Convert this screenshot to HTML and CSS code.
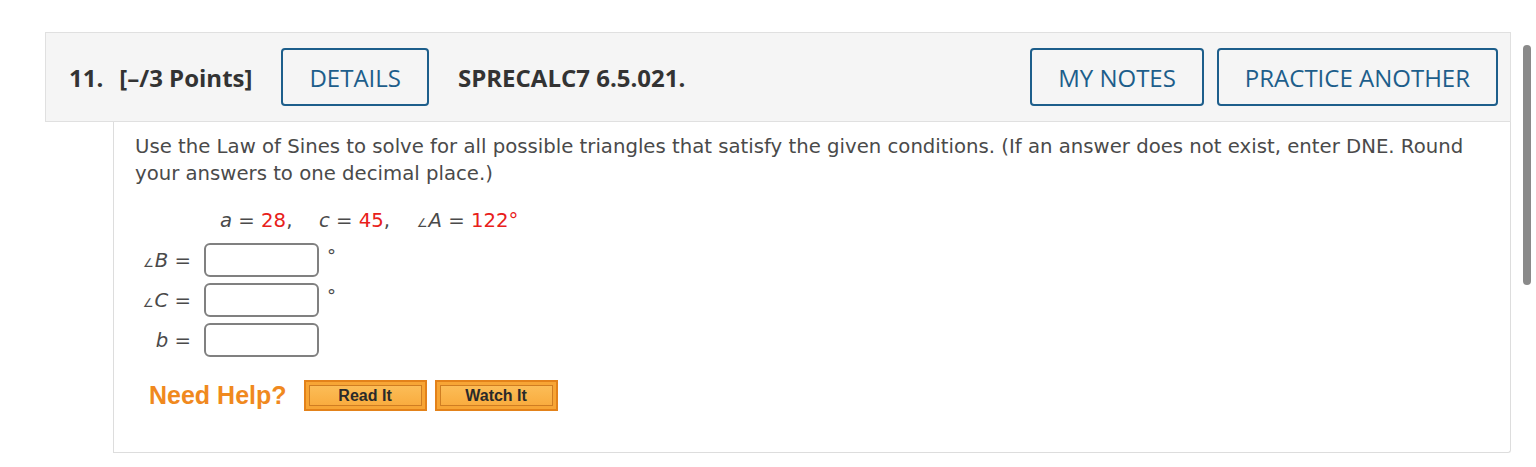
FILE: index.html
```html
<!doctype html>
<html>

<head>
    <link rel="stylesheet" href="styles.css">
</head>

<body>
    <div class="question">
        <div class="question-header">
            <span class="question-number">11.</span>
            <span class="points">[&ndash;/3 Points]</span>
            <button class="header-btn details-btn">DETAILS</button>
            <span class="question-ref">SPRECALC7 6.5.021.</span>
            <span class="spacer"></span>
            <button class="header-btn">MY NOTES</button>
            <button class="header-btn">PRACTICE ANOTHER</button>
        </div>
        <div class="question-body">
            <p class="prompt">
                Use the Law of Sines to solve for all possible triangles that satisfy the given conditions. (If an
                answer does not exist, enter DNE. Round your answers to one decimal place.)
            </p>
            <p class="given">
                <i>a</i> = <span class="value">28</span>,
                <span class="sep"></span>
                <i>c</i> = <span class="value">45</span>,
                <span class="sep"></span>
                <span class="angle">&ang;</span><i>A</i> = <span class="value">122&deg;</span>
            </p>
            <div class="answers">
                <div class="answer-row">
                    <label class="answer-label"><span class="angle">&ang;</span><i>B</i> =</label>
                    <input class="answer-input" type="text">
                    <span class="unit">&deg;</span>
                </div>
                <div class="answer-row">
                    <label class="answer-label"><span class="angle">&ang;</span><i>C</i> =</label>
                    <input class="answer-input" type="text">
                    <span class="unit">&deg;</span>
                </div>
                <div class="answer-row">
                    <label class="answer-label"><i>b</i> =</label>
                    <input class="answer-input" type="text">
                </div>
            </div>
            <div class="need-help">
                <span class="need-help-title">Need Help?</span>
                <button class="help-btn">Read It</button>
                <button class="help-btn">Watch It</button>
            </div>
        </div>
    </div>
    <div class="scroll-thumb"></div>
</body>

</html>
```

FILE: styles.css
```css
html,
body {
    margin: 0;
    background-color: #ffffff;
}

body {
    padding: 32px 25px 0 45px;
}

.question {
    width: 1466px;
}

.question-header {
    display: flex;
    align-items: center;
    height: 88px;
    padding: 0 12px 0 23px;
    background-color: #f5f5f5;
    border: 1px solid #e0e0e0;
    font-family: "Open Sans", sans-serif;
    color: #333333;
}

.question-number {
    font-size: 24px;
    font-weight: 700;
    margin-right: 16px;
}

.points {
    font-size: 24px;
    font-weight: 700;
    margin-right: 29px;
}

.question-ref {
    font-size: 24px;
    font-weight: 700;
    margin-left: 29px;
}

.spacer {
    flex: 1;
}

.header-btn {
    height: 58px;
    padding: 0 26px;
    margin-left: 13px;
    background-color: transparent;
    border: 2px solid #1d5e8b;
    border-radius: 4px;
    font-family: "Open Sans", sans-serif;
    font-size: 24px;
    color: #1d5e8b;
}

.details-btn {
    margin-left: 0;
}

.question-body {
    margin-left: 68px;
    padding: 11px 21px 41px 21px;
    border: 1px solid #dddddd;
    border-top: none;
    border-bottom-right-radius: 3px;
    font-family: "DejaVu Sans", Verdana, sans-serif;
    font-size: 19.7px;
    color: #4a4a4a;
}

.prompt {
    margin: 0;
    line-height: 27px;
}

.given {
    margin: 20px 0 0 85px;
    line-height: 27px;
}

.value {
    color: #e8201a;
}

.sep {
    display: inline-block;
    width: 14px;
}

.angle {
    font-size: 12px;
    font-style: normal;
    margin-right: 1px;
}

.answers {
    display: flex;
    flex-direction: column;
    gap: 6px;
    margin-top: 6px;
}

.answer-row {
    display: flex;
    align-items: center;
}

.answer-label {
    width: 56px;
    margin-right: 13px;
    text-align: right;
}

.answer-input {
    box-sizing: border-box;
    width: 115px;
    height: 34px;
    margin: 0;
    border: 2px solid #808080;
    border-radius: 6px;
    background-color: #ffffff;
}

.unit {
    align-self: flex-start;
    margin-left: 8px;
    margin-top: 2px;
    font-size: 18px;
}

.need-help {
    display: flex;
    align-items: center;
    margin-top: 23px;
    margin-left: 14px;
}

.need-help-title {
    font-family: "Liberation Sans", Arial, sans-serif;
    font-size: 25px;
    font-weight: 700;
    color: #f0891e;
    margin-right: 17px;
}

.help-btn {
    width: 123px;
    height: 31px;
    margin-right: 8px;
    padding: 0;
    background: linear-gradient(#fcc05c, #f9a93a);
    border: 2px solid #e3821a;
    box-shadow: inset 0 0 0 3px #f7a535, inset 0 0 0 4px #cf7d22;
    font-family: "Liberation Sans", Arial, sans-serif;
    font-size: 16px;
    font-weight: 700;
    color: #2a2a2a;
}

.scroll-thumb {
    position: absolute;
    top: 45px;
    left: 1523px;
    width: 8px;
    height: 240px;
    border-radius: 4px;
    background-color: #8a8a8a;
}
```
